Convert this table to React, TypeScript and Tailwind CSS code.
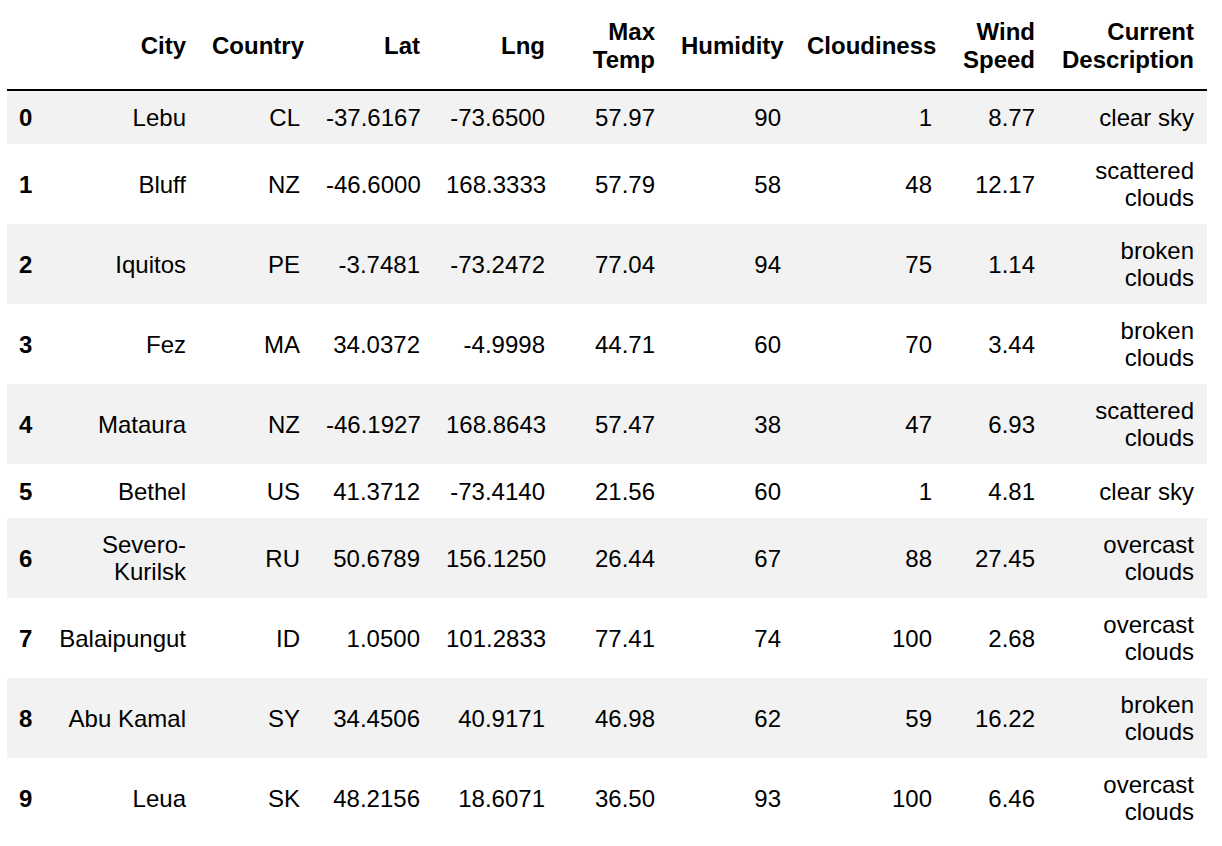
const columns = [
  { key: "idx", label: "", width: "w-[38px]" },
  { key: "city", label: "City", width: "w-[154px]" },
  { key: "country", label: "Country", width: "w-[114px]" },
  { key: "lat", label: "Lat", width: "w-[120px]" },
  { key: "lng", label: "Lng", width: "w-[125px]" },
  { key: "temp", label: "Max|Temp", width: "w-[110px]" },
  { key: "humidity", label: "Humidity", width: "w-[126px]" },
  { key: "cloud", label: "Cloudiness", width: "w-[151px]" },
  { key: "wind", label: "Wind|Speed", width: "w-[103px]" },
  { key: "desc", label: "Current|Description", width: "w-[159px]" },
];

// "|" marks a line break inside a cell
const rows: string[][] = [
  ["0", "Lebu", "CL", "-37.6167", "-73.6500", "57.97", "90", "1", "8.77", "clear sky"],
  ["1", "Bluff", "NZ", "-46.6000", "168.3333", "57.79", "58", "48", "12.17", "scattered|clouds"],
  ["2", "Iquitos", "PE", "-3.7481", "-73.2472", "77.04", "94", "75", "1.14", "broken|clouds"],
  ["3", "Fez", "MA", "34.0372", "-4.9998", "44.71", "60", "70", "3.44", "broken|clouds"],
  ["4", "Mataura", "NZ", "-46.1927", "168.8643", "57.47", "38", "47", "6.93", "scattered|clouds"],
  ["5", "Bethel", "US", "41.3712", "-73.4140", "21.56", "60", "1", "4.81", "clear sky"],
  ["6", "Severo-|Kurilsk", "RU", "50.6789", "156.1250", "26.44", "67", "88", "27.45", "overcast|clouds"],
  ["7", "Balaipungut", "ID", "1.0500", "101.2833", "77.41", "74", "100", "2.68", "overcast|clouds"],
  ["8", "Abu Kamal", "SY", "34.4506", "40.9171", "46.98", "62", "59", "16.22", "broken|clouds"],
  ["9", "Leua", "SK", "48.2156", "18.6071", "36.50", "93", "100", "6.46", "overcast|clouds"],
];

const Lines = ({ text }: { text: string }) => {
  const parts = text.split("|");
  return (
    <>
      {parts.map((p, i) => (
        <span key={i} className="block">
          {p}
        </span>
      ))}
    </>
  );
};

export default function App() {
  return (
    <div className="min-h-screen bg-white pl-[7px] pt-[8px] font-['Liberation_Sans',Arial,sans-serif] text-[24px] leading-[27px] text-black">
      <table className="table-fixed border-collapse w-[1200px]">
        <colgroup>
          {columns.map((c) => (
            <col key={c.key} className={c.width} />
          ))}
        </colgroup>
        <thead>
          <tr>
            {columns.map((c) => (
              <th
                key={c.key}
                className="h-[81px] border-b-2 border-black px-[13px] pt-[10px] pb-[15px] text-right align-middle font-bold leading-[28px] whitespace-nowrap"
              >
                <Lines text={c.label} />
              </th>
            ))}
          </tr>
        </thead>
        <tbody>
          {rows.map((r, ri) => (
            <tr key={ri} className={ri % 2 === 0 ? "bg-[#f2f2f2]" : "bg-white"}>
              {r.map((cell, ci) => (
                <td
                  key={ci}
                  className={
                    ci === 0
                      ? "h-[54px] pl-[12px] pr-[6px] py-[13px] text-left align-middle font-bold whitespace-nowrap"
                      : "h-[54px] px-[13px] py-[13px] text-right align-middle whitespace-nowrap"
                  }
                >
                  <Lines text={cell} />
                </td>
              ))}
            </tr>
          ))}
        </tbody>
      </table>
    </div>
  );
}
